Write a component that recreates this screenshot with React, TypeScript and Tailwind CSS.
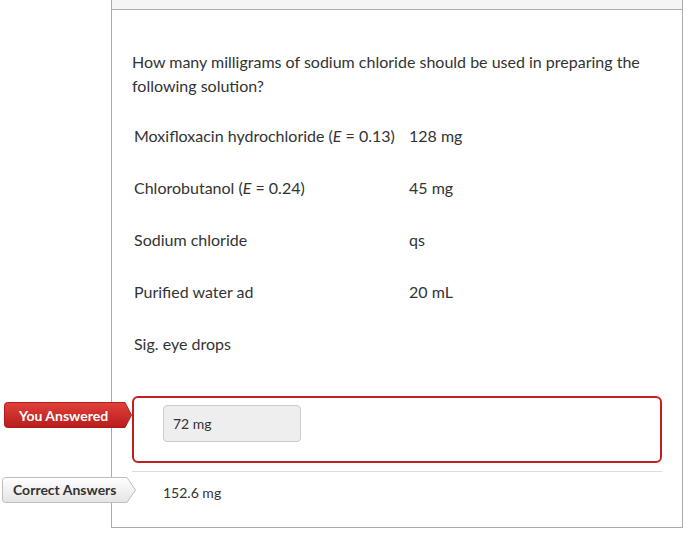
import React from "react";

const rows: [React.ReactNode, string][] = [
	[<>Moxifloxacin hydrochloride (<i>E</i>&nbsp;= 0.13)</>, "128 mg"],
	[<>Chlorobutanol (<i>E</i>&nbsp;= 0.24)</>, "45 mg"],
	["Sodium chloride", "qs"],
	["Purified water ad", "20 mL"],
	["Sig. eye drops", ""],
];

const AnswerTag = ({ label, wrong }: { label: string; wrong?: boolean }) => {
	const w = wrong ? 128 : 134;
	const body = wrong ? 121 : 125;
	return (
		<div className="absolute h-[26px]" style={{ width: w }}>
			<svg width={w} height={26} className="absolute left-0 top-0">
				<defs>
					<linearGradient id={wrong ? "gw" : "gc"} x1="0" y1="0" x2="0" y2="1">
						<stop offset="0" stopColor={wrong ? "#e2413b" : "#ffffff"} />
						<stop offset="1" stopColor={wrong ? "#b71c1c" : "#e4e4e4"} />
					</linearGradient>
				</defs>
				<path
					d={`M3.5 0.5 H${body} L${w - 0.5} 13 L${body} 25.5 H3.5 Q0.5 25.5 0.5 22.5 V3.5 Q0.5 0.5 3.5 0.5 Z`}
					fill={`url(#${wrong ? "gw" : "gc"})`}
					stroke={wrong ? "#b01c1c" : "#bdbdbd"}
				/>
			</svg>
			<span
				className={`relative flex h-full items-center text-[14px] font-bold ${wrong ? "pl-[15px] text-white" : "pl-[11px] text-[#333]"}`}
			>
				{label}
			</span>
		</div>
	);
};

export default function App() {
	return (
		<div className="relative h-[533px] w-[690px] overflow-hidden bg-white text-[#333]" style={{ fontFamily: "Lato, 'Open Sans', sans-serif" }}>
			<div className="ml-[111px] w-[572px] border-x border-b border-[#aaa]">
				<div className="h-[10px] border-b border-[#aaa] bg-[#f5f5f5]" />
				<div className="px-[20px] pt-[40px]">
					<p className="text-[16px] leading-[24px]">
						How many milligrams of sodium chloride should be used in preparing the following solution?
					</p>
					<div className="mt-[12px] grid grid-cols-[275px_auto] pl-[2px] text-[16px]">
						{rows.map(([name, amt], i) => (
							<React.Fragment key={i}>
								<div className="flex h-[52px] items-center">{name}</div>
								<div className="flex h-[52px] items-center">{amt}</div>
							</React.Fragment>
						))}
					</div>

					<div className="relative mt-[26px] h-[67px] w-[530px] rounded-[6px] border-2 border-[#c41f1f] pl-[29px] pt-[7px]">
						<div className="-left-[130px] top-[4px] absolute">
							<AnswerTag label="You Answered" wrong />
						</div>
						<div className="flex h-[37px] w-[138px] items-center rounded-[4px] border border-[#ccc] bg-[#eee] pl-[9px] text-[14px]">
							72 mg
						</div>
					</div>

					<div className="relative mt-[8px] h-[56px] w-[530px] border-t border-[#ddd] pl-[31px] pt-[11px] text-[14px] leading-[20px]">
						<div className="-left-[130px] top-[5px] absolute">
							<AnswerTag label="Correct Answers" />
						</div>
						152.6 mg
					</div>
				</div>
			</div>
		</div>
	);
}
